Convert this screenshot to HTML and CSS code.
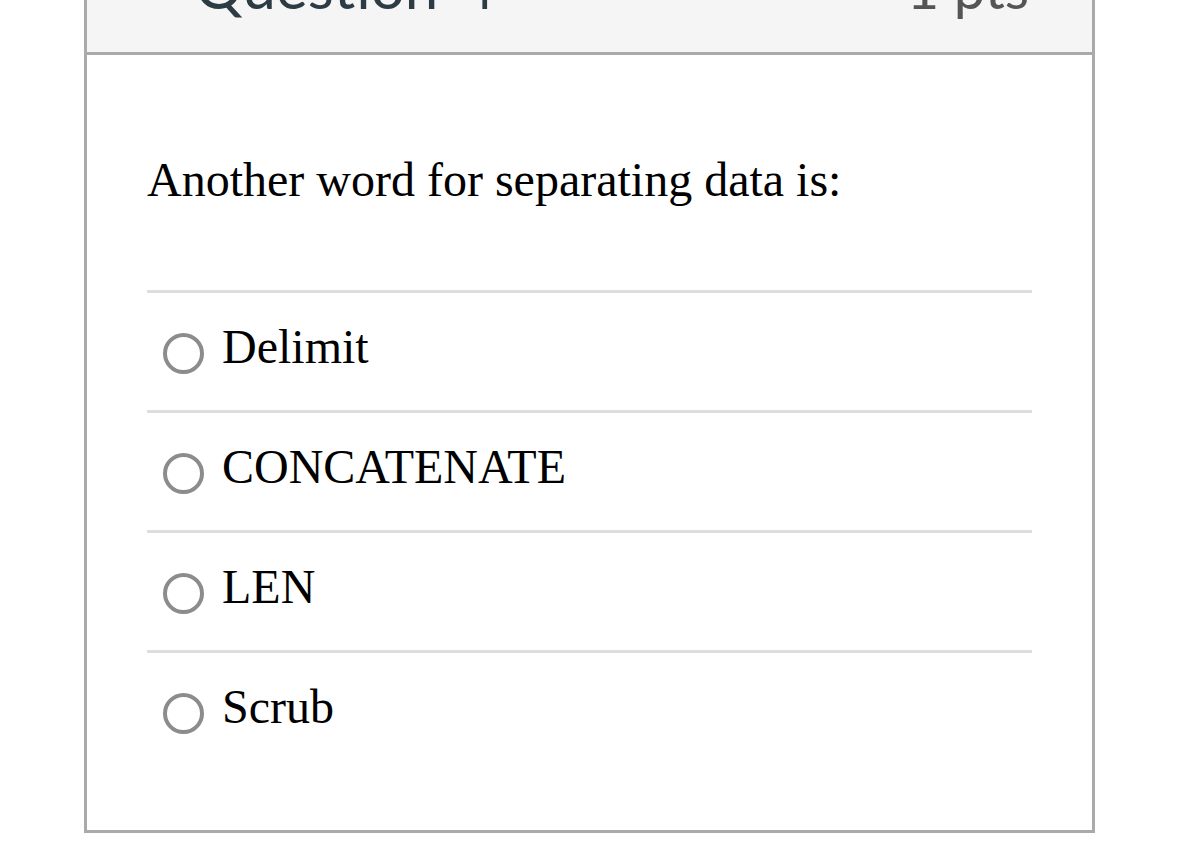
FILE: index.html
```html
<!DOCTYPE html>
<html lang="en">
<head>
<meta charset="utf-8">
<title>Question 4</title>
<link rel="stylesheet" href="styles.css">
</head>
<body>
<div class="question">
  <div class="header">
    <span class="title">Question 4</span>
    <span class="points">1 pts</span>
  </div>
  <div class="content">
    <p class="text">Another word for separating data is:</p>
    <div class="answers">
      <label class="answer"><span class="radio"></span><span class="label">Delimit</span></label>
      <label class="answer"><span class="radio"></span><span class="label">CONCATENATE</span></label>
      <label class="answer"><span class="radio"></span><span class="label">LEN</span></label>
      <label class="answer"><span class="radio"></span><span class="label">Scrub</span></label>
    </div>
  </div>
</div>
</body>
</html>
```
FILE: styles.css
```css
html, body {
  margin: 0;
  padding: 0;
  background: #ffffff;
}
body {
  overflow: hidden;
  padding-top: 1px;
}
.question {
  box-sizing: border-box;
  width: 1011px;
  margin: -71px 0 0 84px;
  border: 3px solid #aaaaaa;
  background: #ffffff;
}
.header {
  display: flex;
  justify-content: space-between;
  align-items: baseline;
  height: 122px;
  box-sizing: border-box;
  padding: 17px 63px 33px 108px;
  background: #f5f5f5;
  border-bottom: 3px solid #aaaaaa;
  font-family: Lato, "Open Sans", sans-serif;
  line-height: 72px;
}
.title {
  color: #2d3b45;
  font-size: 60px;
  word-spacing: 7px;
}
.points {
  color: #555555;
  font-size: 56px;
}
.content {
  padding: 98px 60px 60px 60px;
  font-family: "Liberation Serif", "Times New Roman", serif;
  font-size: 48px;
  color: #000000;
}
.text {
  margin: 0 0 84px 0;
  line-height: 53px;
}
.answer {
  display: flex;
  align-items: flex-start;
  border-top: 3px solid #dddddd;
  padding: 27px 0 36px 16px;
  line-height: 53px;
}
.radio {
  box-sizing: border-box;
  flex: none;
  width: 41px;
  height: 41px;
  margin-top: 13px;
  margin-right: 18px;
  border: 4px solid #8c8c8c;
  border-radius: 50%;
}
.label {
  display: block;
}
```
